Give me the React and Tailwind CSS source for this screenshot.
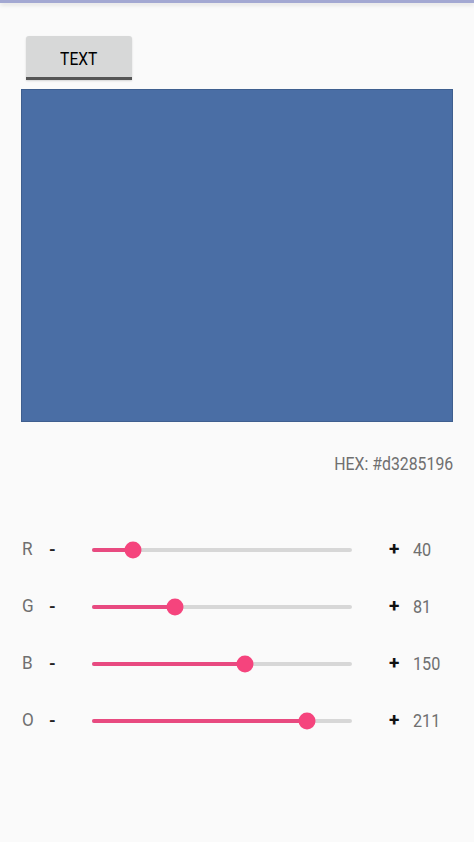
import React from "react";

const channels = [
  { label: "R", value: 40 },
  { label: "G", value: 81 },
  { label: "B", value: 150 },
  { label: "O", value: 211 },
];

function ChannelRow({ label, value }) {
  const pct = (value / 255) * 100;
  return (
    <div className="flex h-[57px] items-center">
      <span className="w-[28px] pl-[1px]">
        <span className="inline-block origin-left scale-x-[0.9] text-[19px] text-[#6f6f6f]">{label}</span>
      </span>
      <span className="w-[43px] text-[17px] font-bold text-[#222]">-</span>
      <div className="relative h-[4px] w-[260px] rounded-full bg-[#d7d7d7]">
        <div
          className="absolute left-0 top-0 h-full rounded-full bg-[#e84a80]"
          style={{ width: `${pct}%` }}
        />
        <div
          className="absolute top-1/2 h-[17px] w-[17px] -translate-x-1/2 -translate-y-1/2 rounded-full bg-[#f5447d]"
          style={{ left: `${pct}%` }}
        />
      </div>
      <span className="ml-[37px] w-[24px] text-[19px] font-bold text-[#111]">+</span>
      <span className="inline-block origin-left scale-x-[0.9] text-[18px] text-[#6f6f6f]">{value}</span>
    </div>
  );
}

export default function App() {
  return (
    <div
      className="relative min-h-[842px] w-[474px] bg-[#fafafa]"
      style={{ fontFamily: "Roboto, 'Noto Sans', sans-serif" }}
    >
      <div className="h-[3px] w-full bg-[#a3a8d2] shadow-[0_2px_4px_rgba(0,0,0,0.12)]" />
      <div className="px-[21px] pt-[33px]">
        <button className="ml-[5px] flex h-[44px] w-[106px] items-center justify-center rounded-t-[3px] border-b-[3px] border-[#555] bg-[#d7d8d8] pt-[5px] text-[19px] font-normal text-black shadow-[0_1px_2px_rgba(0,0,0,0.15)]">
          <span className="inline-block scale-x-[0.82]">TEXT</span>
        </button>
        <div className="mt-[9px] h-[333px] w-[432px] border border-[#3f5f8f] bg-[#4a6ea5]" />
        <div className="mt-[28px] flex justify-end">
          <span className="inline-block origin-right scale-x-[0.88] text-[18px] text-[#6f6f6f]">
            HEX: #d3285196
          </span>
        </div>
        <div className="mt-[44px] flex flex-col">
          {channels.map((c) => (
            <ChannelRow key={c.label} label={c.label} value={c.value} />
          ))}
        </div>
      </div>
    </div>
  );
}
